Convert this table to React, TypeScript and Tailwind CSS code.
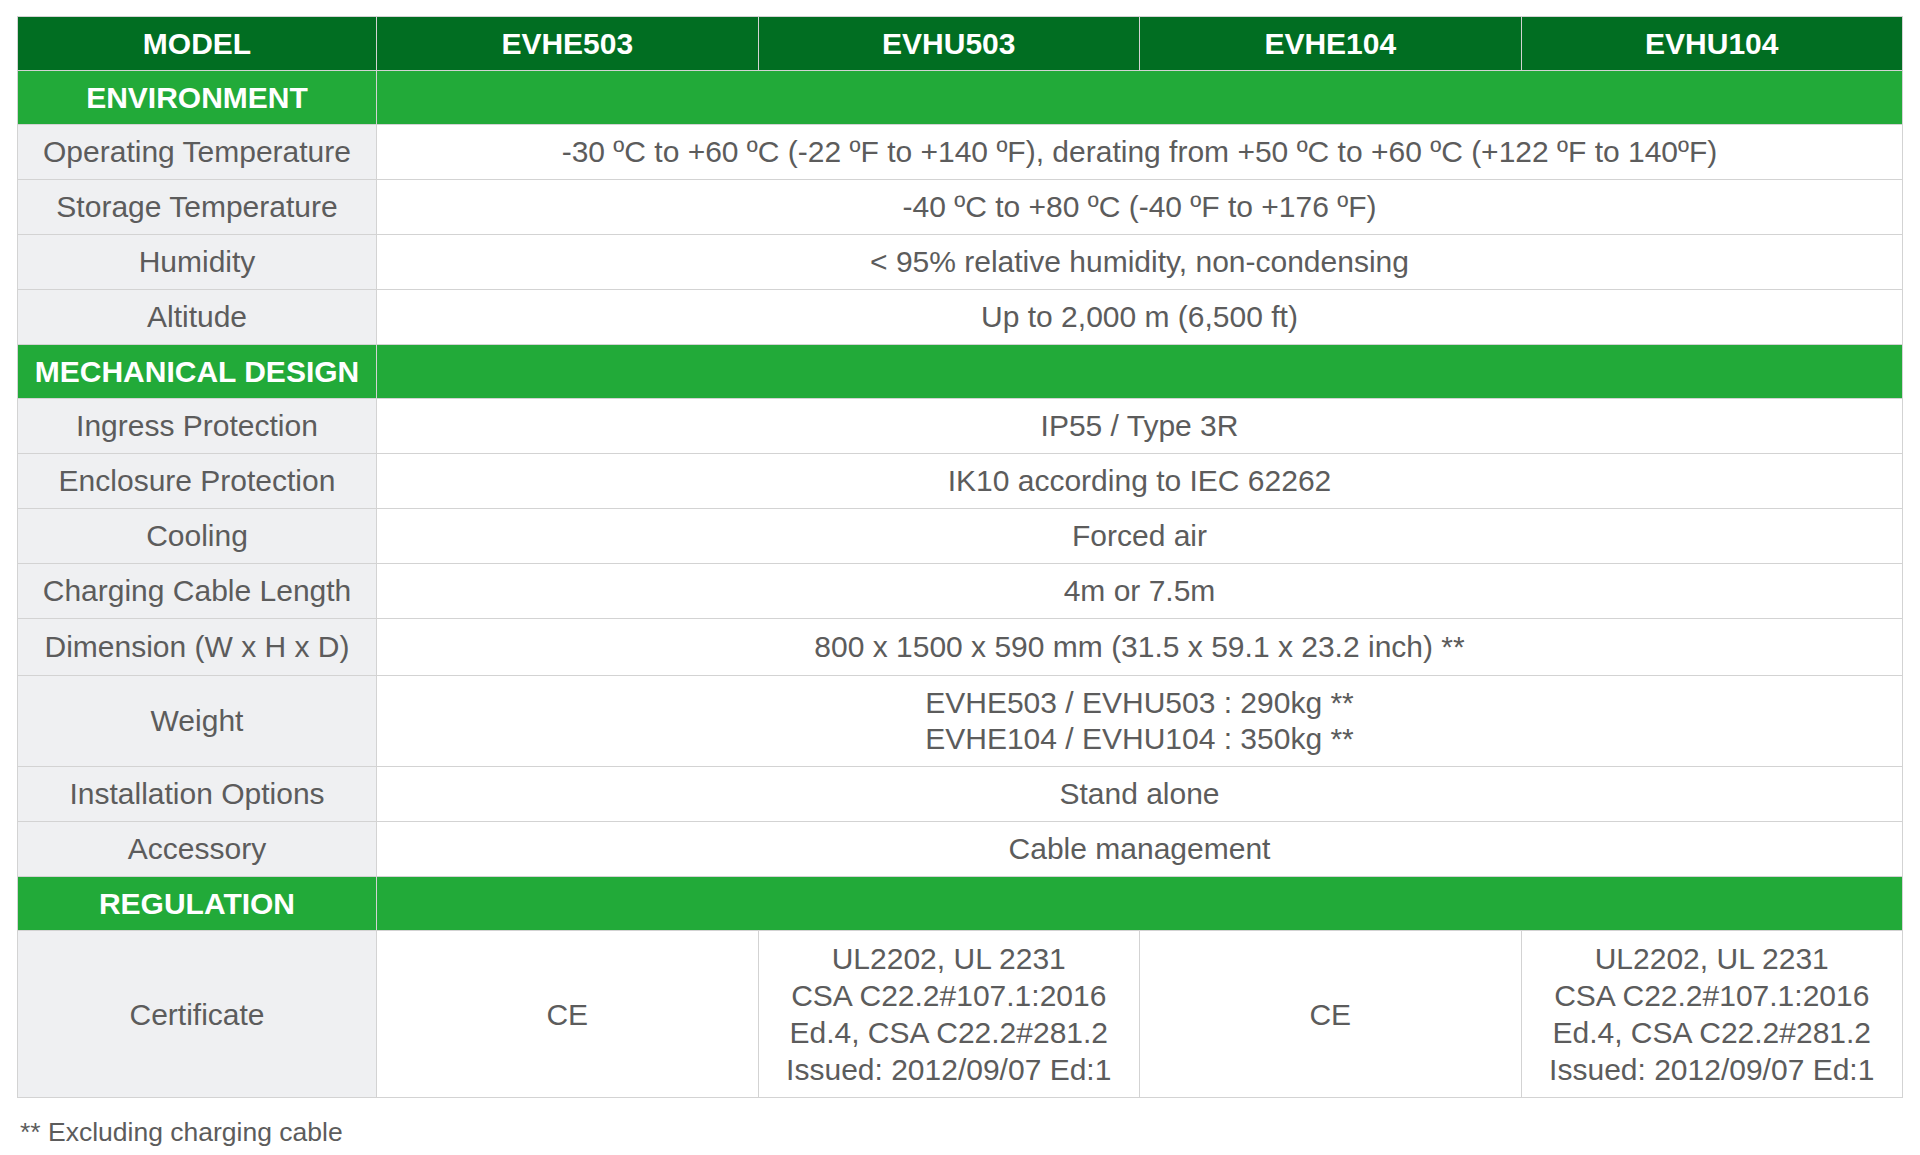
const models = ["EVHE503", "EVHU503", "EVHE104", "EVHU104"]

type Row =
  | { kind: "section"; label: string }
  | { kind: "spec"; label: string; value: string[]; padY?: string }

const rows: Row[] = [
  { kind: "section", label: "ENVIRONMENT" },
  {
    kind: "spec",
    label: "Operating Temperature",
    value: ["-30 ºC to +60 ºC (-22 ºF to +140 ºF), derating from +50 ºC to +60 ºC (+122 ºF to 140ºF)"],
  },
  { kind: "spec", label: "Storage Temperature", value: ["-40 ºC to +80 ºC (-40 ºF to +176 ºF)"] },
  { kind: "spec", label: "Humidity", value: ["< 95% relative humidity, non-condensing"] },
  { kind: "spec", label: "Altitude", value: ["Up to 2,000 m (6,500 ft)"] },
  { kind: "section", label: "MECHANICAL DESIGN" },
  { kind: "spec", label: "Ingress Protection", value: ["IP55 / Type 3R"] },
  { kind: "spec", label: "Enclosure Protection", value: ["IK10 according to IEC 62262"] },
  { kind: "spec", label: "Cooling", value: ["Forced air"] },
  { kind: "spec", label: "Charging Cable Length", value: ["4m or 7.5m"] },
  {
    kind: "spec",
    label: "Dimension (W x H x D)",
    value: ["800 x 1500 x 590 mm (31.5 x 59.1 x 23.2 inch) **"],
    padY: "py-[10px]",
  },
  {
    kind: "spec",
    label: "Weight",
    value: ["EVHE503 / EVHU503 : 290kg **", "EVHE104 / EVHU104 : 350kg **"],
  },
  { kind: "spec", label: "Installation Options", value: ["Stand alone"] },
  { kind: "spec", label: "Accessory", value: ["Cable management"] },
  { kind: "section", label: "REGULATION" },
]

const ulCert = ["UL2202, UL 2231", "CSA C22.2#107.1:2016", "Ed.4, CSA C22.2#281.2", "Issued: 2012/09/07 Ed:1"]
const certs = [["CE"], ulCert, ["CE"], ulCert]

const cell = "border border-[#d3d3d3] text-center align-middle"

export default function App() {
  return (
    <div className="min-h-[1155px] bg-white pt-[16px] pl-[17px] font-['Liberation_Sans',Arial,sans-serif] text-[#5c5c5c]">
      <table className="w-[1886px] table-fixed border-collapse text-[30px]">
        <colgroup>
          <col className="w-[359px]" />
          <col />
          <col />
          <col />
          <col />
        </colgroup>
        <thead>
          <tr className="bg-[#016e22] text-white font-bold">
            <th className={`${cell} py-[9px] leading-[35px] border-[#b9c9bc]`}>MODEL</th>
            {models.map((m) => (
              <th key={m} className={`${cell} py-[9px] leading-[35px] border-[#b9c9bc]`}>
                {m}
              </th>
            ))}
          </tr>
        </thead>
        <tbody>
          {rows.map((r) =>
            r.kind === "section" ? (
              <tr key={r.label} className="bg-[#22aa39] text-white font-bold">
                <td className={`${cell} py-[9px] leading-[35px] border-[#c7d9c9]`}>{r.label}</td>
                <td colSpan={4} className={`${cell} py-[9px] leading-[35px] border-[#c7d9c9]`}></td>
              </tr>
            ) : (
              <tr key={r.label}>
                <td className={`${cell} ${r.padY ?? "py-[9px]"} leading-[36px] bg-[#eff0f2]`}>{r.label}</td>
                <td colSpan={4} className={`${cell} ${r.padY ?? "py-[9px]"} leading-[36px] bg-white`}>
                  {r.value.map((v) => (
                    <div key={v}>{v}</div>
                  ))}
                </td>
              </tr>
            ),
          )}
          <tr>
            <td className={`${cell} py-[9px] leading-[37px] bg-[#eff0f2]`}>Certificate</td>
            {certs.map((c, i) => (
              <td key={i} className={`${cell} py-[9px] leading-[37px] bg-white`}>
                {c.map((line) => (
                  <div key={line}>{line}</div>
                ))}
              </td>
            ))}
          </tr>
        </tbody>
      </table>
      <p className="mt-[19px] pl-[3px] text-[26.5px] leading-[30px]">** Excluding charging cable</p>
    </div>
  )
}
